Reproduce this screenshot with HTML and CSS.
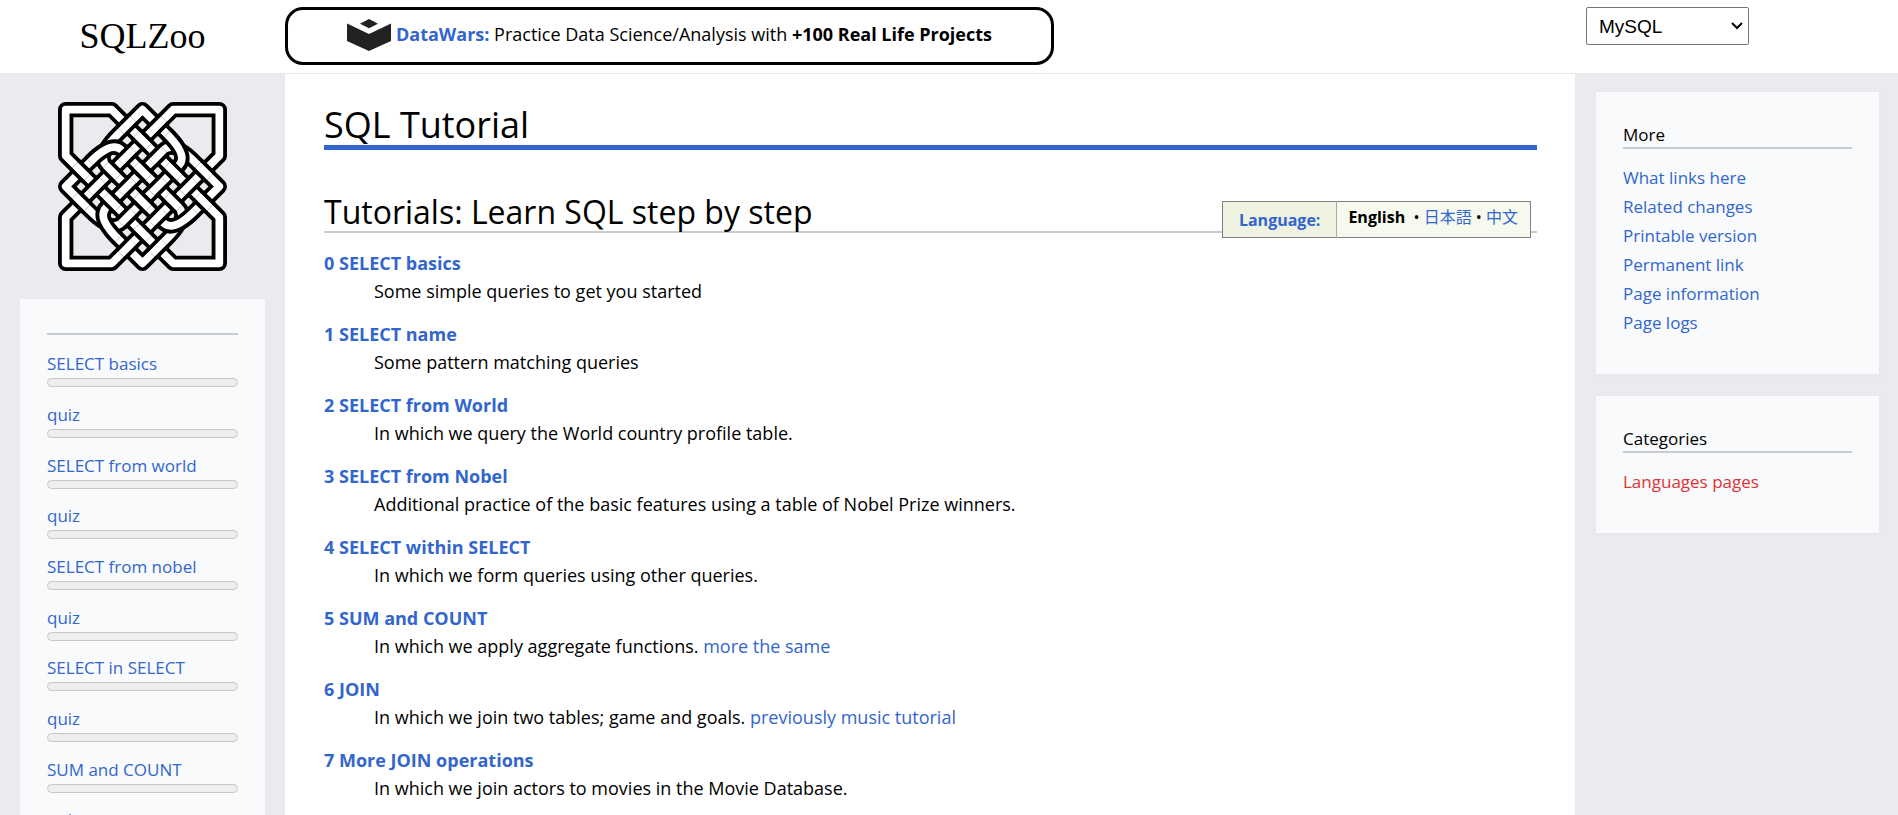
FILE: index.html
```html
<!DOCTYPE html>
<html lang="en">
<head>
  <meta charset="UTF-8">
  <meta name="viewport" content="width=device-width, initial-scale=1.0">
  <title>SQLZoo</title>
  <link rel="stylesheet" href="styles.css">
</head>
<body>
  <header class="header">
    <a class="site-name" href="#">SQLZoo</a>
    <div class="header-main">
      <div class="banner">
        <svg class="banner-icon" viewBox="0 0 44 32" aria-hidden="true">
          <path d="M0 4.500L22 15L44 4.500V22L22 32L0 22Z"/>
          <path d="M22 0L31 4.700L22 9.300L13 4.700Z"/>
        </svg>
        <span><a href="#"><b>DataWars:</b></a> Practice Data Science/Analysis with <b>+100 Real Life Projects</b></span>
      </div>
    </div>
    <div class="header-tools">
      <select class="engine" aria-label="SQL engine">
        <option>MySQL</option>
        <option>Oracle</option>
        <option>SQL Server</option>
      </select>
    </div>
  </header>

  <div class="layout">
    <aside class="side-left">
      <a class="logo" href="#" aria-label="Main page">
        <!-- celtic knot: strands first, then the parts that pass over -->
        <svg class="knot" viewBox="-55 -55 110 110">
          <defs>
            <path id="strand" d="M7 3L-13.500 23.500C-19 29-27 23-34 16L-50 0L-34 -16C-27 -23-19 -29-13.500 -23.500L7 -3"/>
            <path id="frame" d="M-20 -50H-50V-20L20 50H50V20Z"/>
            <g id="strands">
              <use href="#frame"/>
              <use href="#frame" transform="rotate(90)"/>
              <use href="#strand"/>
              <use href="#strand" transform="rotate(90)"/>
              <use href="#strand" transform="rotate(180)"/>
              <use href="#strand" transform="rotate(270)"/>
            </g>
            <path id="quarter" d="M-34 -16C-27 -23-19 -29-13.500 -23.500M-4 -34l8 8M-4 -14l8 8M-24 -14l8 8M16 -14l8 8M-44 -14l8 8M36 -14l8 8"/>
            <g id="overs">
              <use href="#quarter"/>
              <use href="#quarter" transform="rotate(90)"/>
              <use href="#quarter" transform="rotate(180)"/>
              <use href="#quarter" transform="rotate(270)"/>
            </g>
          </defs>
          <use class="edge" href="#strands"/>
          <use class="core" href="#strands"/>
          <use class="edge" href="#overs"/>
          <use class="core" href="#overs"/>
        </svg>
      </a>
      <nav class="portal portal-tall">
        <h3></h3>
        <ul class="progress-list">
          <li><a href="#">SELECT basics</a><div class="bar"></div></li>
          <li><a href="#">quiz</a><div class="bar"></div></li>
          <li><a href="#">SELECT from world</a><div class="bar"></div></li>
          <li><a href="#">quiz</a><div class="bar"></div></li>
          <li><a href="#">SELECT from nobel</a><div class="bar"></div></li>
          <li><a href="#">quiz</a><div class="bar"></div></li>
          <li><a href="#">SELECT in SELECT</a><div class="bar"></div></li>
          <li><a href="#">quiz</a><div class="bar"></div></li>
          <li><a href="#">SUM and COUNT</a><div class="bar"></div></li>
          <li><a href="#">quiz</a><div class="bar"></div></li>
        </ul>
      </nav>
    </aside>

    <main class="content">
      <h1>SQL Tutorial</h1>
      <div class="section-head">
        <h2>Tutorials: Learn SQL step by step</h2>
        <table class="languages">
          <tr>
            <th><a href="#">Language:</a></th>
            <td><b>English</b> &nbsp;• <a href="#" lang="ja">日本語</a> • <a href="#" lang="zh">中文</a></td>
          </tr>
        </table>
      </div>
      <dl>
        <dt><a href="#">0 SELECT basics</a></dt>
        <dd>Some simple queries to get you started</dd>
        <dt><a href="#">1 SELECT name</a></dt>
        <dd>Some pattern matching queries</dd>
        <dt><a href="#">2 SELECT from World</a></dt>
        <dd>In which we query the World country profile table.</dd>
        <dt><a href="#">3 SELECT from Nobel</a></dt>
        <dd>Additional practice of the basic features using a table of Nobel Prize winners.</dd>
        <dt><a href="#">4 SELECT within SELECT</a></dt>
        <dd>In which we form queries using other queries.</dd>
        <dt><a href="#">5 SUM and COUNT</a></dt>
        <dd>In which we apply aggregate functions. <a href="#">more the same</a></dd>
        <dt><a href="#">6 JOIN</a></dt>
        <dd>In which we join two tables; game and goals. <a href="#">previously music tutorial</a></dd>
        <dt><a href="#">7 More JOIN operations</a></dt>
        <dd>In which we join actors to movies in the Movie Database.</dd>
      </dl>
    </main>

    <aside class="side-right">
      <nav class="portal">
        <h3>More</h3>
        <ul>
          <li><a href="#">What links here</a></li>
          <li><a href="#">Related changes</a></li>
          <li><a href="#">Printable version</a></li>
          <li><a href="#">Permanent link</a></li>
          <li><a href="#">Page information</a></li>
          <li><a href="#">Page logs</a></li>
        </ul>
      </nav>
      <nav class="portal">
        <h3>Categories</h3>
        <ul>
          <li><a class="new" href="#">Languages pages</a></li>
        </ul>
      </nav>
    </aside>
  </div>
</body>
</html>
```
FILE: styles.css
```css
:root {
  --link: #3366cc;
  --line: #c8ccd1;
  --page: #eaebef;
}

* {
  box-sizing: border-box;
}

body {
  margin: 0;
  height: 100vh;
  overflow: hidden;
  display: flex;
  flex-direction: column;
  font-family: "Open Sans", "Noto Sans CJK JP", sans-serif;
  font-size: 17px;
  line-height: 29px;
  color: #000;
  background: var(--page);
}

a {
  color: var(--link);
  text-decoration: none;
}

a.new {
  color: #dd3333;
}

ul, dl {
  list-style: none;
  margin: 0;
  padding: 0;
}

.header, .layout {
  display: grid;
  grid-template-columns: 285px 1fr 323px;
}

.header {
  flex: none;
  height: 74px;
  background: #fff;
  border-bottom: 1px solid #e8e8ea;
}

.site-name {
  align-self: center;
  text-align: center;
  font-family: "Liberation Serif", serif;
  font-size: 36px;
  color: #000;
}

.header-main {
  padding-top: 7px;
}

.banner {
  display: flex;
  align-items: center;
  justify-content: center;
  gap: 5px;
  width: 769px;
  max-width: 100%;
  height: 58px;
  padding-bottom: 2px;
  border: 3px solid #000;
  border-radius: 18px;
  font-size: 18px;
}

.banner span {
  padding-bottom: 2px;
}

.banner-icon {
  width: 44px;
  height: 32px;
  fill: #222;
}

.header-tools {
  padding: 7px 11px;
}

.engine {
  width: 163px;
  height: 38px;
  padding: 0 12px;
  border: 1px solid #767676;
  border-radius: 2px;
  appearance: none;
  background: #fff url("data:image/svg+xml,%3Csvg xmlns='http://www.w3.org/2000/svg' width='12' height='8'%3E%3Cpath d='M1 1l5 5 5-5' fill='none' stroke='%23000' stroke-width='2'/%3E%3C/svg%3E") no-repeat right 5px center;
  color: #000;
  font-family: "Liberation Sans", sans-serif;
  font-size: 19px;
}

.layout {
  flex: 1 0 auto;
}

.logo {
  display: block;
  padding: 28px 0;
  text-align: center;
}

.knot {
  display: block;
  width: 169px;
  height: 169px;
  margin: 0 auto;
  fill: none;
  stroke-linejoin: round;
}

.edge {
  stroke: #000;
  stroke-width: 10px;
}

.core {
  stroke: #fff;
  stroke-width: 5px;
}

.portal {
  margin: 0 20px 22px;
  padding: 28px 27px 37px;
  background: #f8fafc;
  box-shadow: 0 1px 2px 2px rgba(0, 0, 0, 0.01);
}

.portal h3 {
  height: 29px;
  margin: 0 0 14px;
  border-bottom: 2px solid var(--line);
  font-size: 17px;
  font-weight: normal;
}

.portal-tall h3 {
  height: 8px;
}

.side-left .portal {
  min-height: 560px;
}

.side-right {
  padding-top: 18px;
}

.side-right .portal {
  margin-right: 19px;
  margin-left: 21px;
}

.progress-list li {
  height: 51px;
}

.progress-list li:nth-child(3n) {
  height: 50px;
}

.bar {
  height: 9px;
  border: 1px solid #c6c6c6;
  border-radius: 5px;
  background: #eee;
}

.content {
  padding: 31px 38px 31px 39px;
  background: #fff;
  font-size: 18px;
}

h1, h2 {
  margin: 0;
  font-weight: normal;
}

h1 {
  font-size: 36px;
  line-height: 40px;
  border-bottom: 5px solid var(--link);
}

.section-head {
  position: relative;
  margin-top: 43px;
}

h2 {
  font-size: 32px;
  line-height: 38px;
  border-bottom: 2px solid var(--line);
}

/* sits over the heading's rule */
.languages {
  position: absolute;
  top: 8px;
  right: 6px;
  border: 1px solid #808080;
  border-collapse: collapse;
  background: #f6f9ed;
  font-size: 16px;
  line-height: 21px;
}

.languages th {
  padding: 8px 16px 6px;
  border-right: 1px solid #aaa;
  background: #eef2e0;
}

.languages td {
  padding: 5px 12px 9px 11px;
}

dl {
  padding-top: 16px;
}

dt {
  line-height: 28px;
  font-weight: bold;
}

dd {
  margin: 0 0 15px 50px;
  line-height: 28px;
}
```
